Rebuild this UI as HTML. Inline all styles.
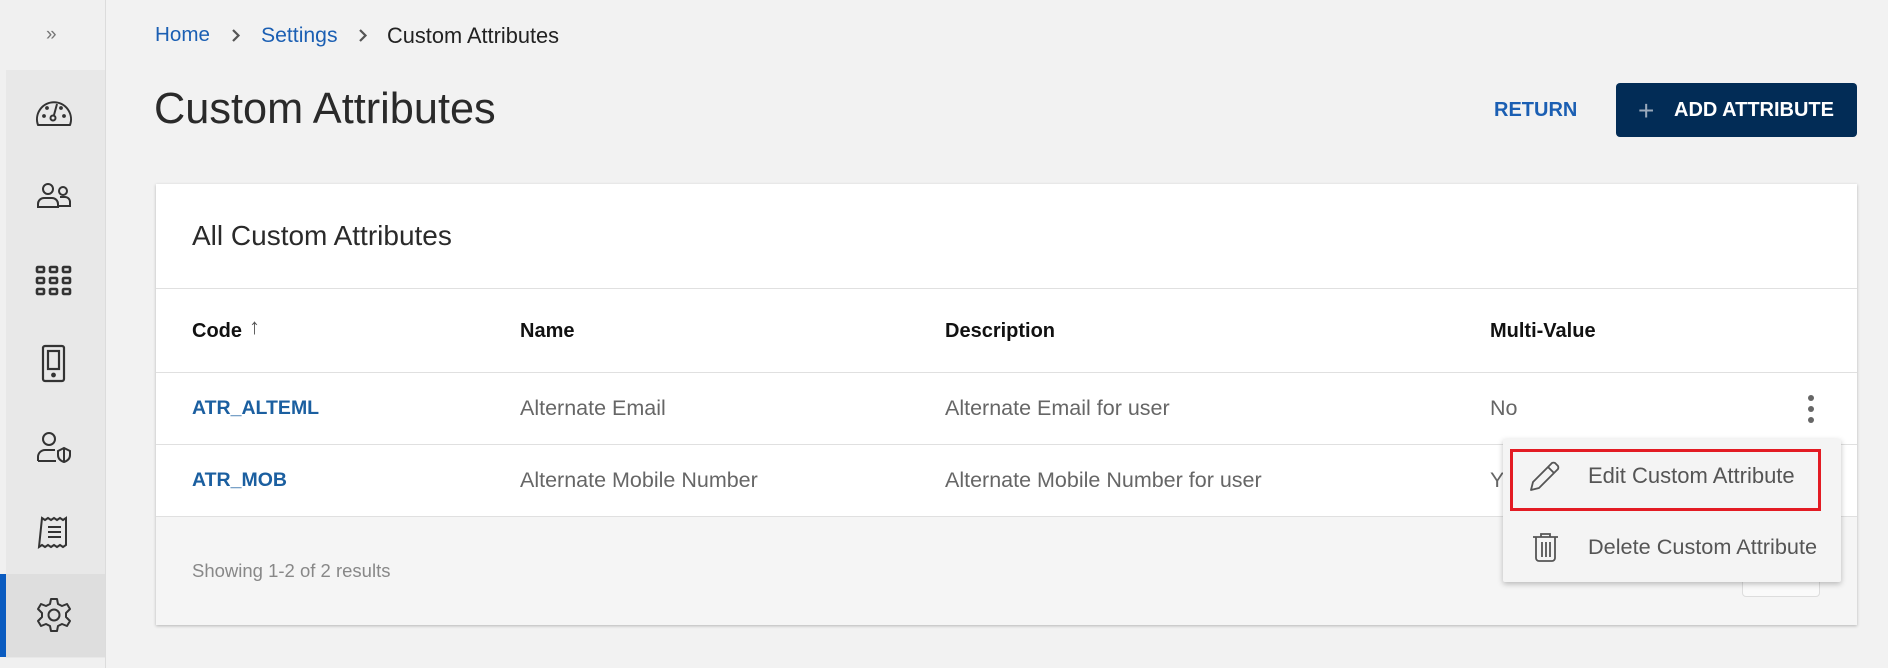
<!DOCTYPE html>
<html><head><meta charset="utf-8"><style>
*{margin:0;padding:0;box-sizing:border-box}
body{width:1888px;height:668px;background:#f2f2f2;font-family:"Liberation Sans",Arial,sans-serif;position:relative;overflow:hidden;color:#333}
.abs{position:absolute}
.sb{left:0;top:0;width:106px;height:668px;background:#f0f0f0;border-right:1px solid #dcdcdc}
.sbi{left:6px;top:70px;width:99px;height:588px;background:#e8e8e8}
.act{left:0;top:574px;width:105px;height:83px;background:#dedede}
.actbar{left:0;top:574px;width:6px;height:83px;background:#0a5bc0}
.ic{left:34px;width:40px;height:40px}
svg{overflow:visible}
.t{white-space:nowrap;line-height:1}
.card{left:156px;top:184px;width:1701px;height:441px;background:#fff;box-shadow:0 1px 3px rgba(0,0,0,.25)}
.line{left:156px;width:1701px;height:1px;background:#e0e0e0}
.b{font-size:21.5px;color:#666}
.h{font-size:20px;font-weight:bold;color:#111}
</style></head><body>
<div class="abs sb"></div>
<div class="abs sbi"></div>
<div class="abs act"></div>
<div class="abs actbar"></div>
<div class="abs t" style="left:46px;top:25px;font-size:19px;color:#777">»</div>
<svg class="abs ic" style="top:92px" viewBox="0 0 40 40" fill="none" stroke="#333" stroke-width="2"><path d="M4 33 A17 17 0 1 1 36 33 Z" stroke-linejoin="round"/><circle cx="19" cy="26" r="2.5"/><path d="M20 23 L23 12"/><circle cx="10" cy="24" r=".9" fill="#333"/><circle cx="13" cy="16" r=".9" fill="#333"/><circle cx="30" cy="24" r=".9" fill="#333"/><circle cx="27" cy="16" r=".9" fill="#333"/></svg>
<svg class="abs ic" style="top:176px" viewBox="0 0 40 40" fill="none" stroke="#333" stroke-width="2"><circle cx="14" cy="13" r="5"/><path d="M4 31 v-3 a6 6 0 0 1 6-6 h8 a6 6 0 0 1 6 6 v3 Z"/><circle cx="29" cy="15" r="4"/><path d="M26 21 h5 a5 5 0 0 1 5 5 v4 h-11"/></svg>
<svg class="abs ic" style="top:260px" viewBox="0 0 40 40" fill="none" stroke="#333" stroke-width="2.6"><g><rect x="3" y="7" width="7" height="5" rx="1"/><rect x="16" y="7" width="7" height="5" rx="1"/><rect x="29" y="7" width="7" height="5" rx="1"/><rect x="3" y="18" width="7" height="5" rx="1"/><rect x="16" y="18" width="7" height="5" rx="1"/><rect x="29" y="18" width="7" height="5" rx="1"/><rect x="3" y="29" width="7" height="5" rx="1"/><rect x="16" y="29" width="7" height="5" rx="1"/><rect x="29" y="29" width="7" height="5" rx="1"/></g></svg>
<svg class="abs ic" style="top:344px" viewBox="0 0 40 40" fill="none" stroke="#333" stroke-width="2.2"><rect x="9" y="2" width="21" height="35" rx="2"/><rect x="14" y="7" width="11" height="18"/><circle cx="19.5" cy="31" r="1.3" fill="#333"/></svg>
<svg class="abs ic" style="top:428px" viewBox="0 0 40 40" fill="none" stroke="#333" stroke-width="2"><circle cx="15" cy="11" r="6"/><path d="M4 33 v-4 a7 7 0 0 1 7-7 h10 M4 33 h18"/><path d="M24 23 l6-3 l6 3 v4 c0 4-3 6-6 7 c-3-1-6-3-6-7z M30 20 v14"/></svg>
<svg class="abs ic" style="top:512px" viewBox="0 0 40 40" fill="none" stroke="#333" stroke-width="2"><path d="M8 6 l3 2 l3-2 l3 2 l3-2 l3 2 l3-2 l3 2 l3-2 v27 l-3 2 l-3-2 l-3 2 l-3-2 l-3 2 l-3-2 l-3 2 l-3-2 l-3 2z"/><path d="M14 15 h13 M14 20 h13 M14 25 h13"/></svg>
<svg class="abs ic" style="top:595px" viewBox="0 0 40 40" fill="none" stroke="#333" stroke-width="2"><path d="M17 4 h6 l1 5 l4 2 l5-2 l3 5 l-4 4 v4 l4 4 l-3 5 l-5-2 l-4 2 l-1 5 h-6 l-1-5 l-4-2 l-5 2 l-3-5 l4-4 v-4 l-4-4 l3-5 l5 2 l4-2z" stroke-linejoin="round"/><circle cx="20" cy="20" r="5.5"/></svg>

<div class="abs t" style="left:155px;top:25px;font-size:20.6px;color:#1b5fb3">Home</div>
<svg class="abs" style="left:232px;top:29px;width:8px;height:13px" viewBox="0 0 8 13" fill="none" stroke="#555" stroke-width="2.2"><path d="M1 1 l5.5 5.5 L1 12"/></svg>
<div class="abs t" style="left:261px;top:25px;font-size:21.2px;color:#1b5fb3">Settings</div>
<svg class="abs" style="left:359px;top:29px;width:8px;height:13px" viewBox="0 0 8 13" fill="none" stroke="#555" stroke-width="2.2"><path d="M1 1 l5.5 5.5 L1 12"/></svg>
<div class="abs t" style="left:387px;top:25px;font-size:21.8px;color:#222">Custom Attributes</div>
<div class="abs t" style="left:154px;top:88px;font-size:43.3px;color:#2a2a2a">Custom Attributes</div>

<div class="abs t" style="left:1494px;top:100px;font-size:20px;font-weight:bold;color:#1b5fb3">RETURN</div>
<div class="abs" style="left:1616px;top:83px;width:241px;height:54px;background:#022c56;border-radius:4px"></div>
<div class="abs t" style="left:1638px;top:97px;font-size:28px;color:#9aa9bb">+</div>
<div class="abs t" style="left:1674px;top:100px;font-size:20px;font-weight:bold;color:#fff">ADD ATTRIBUTE</div>

<div class="abs card"></div>
<div class="abs t" style="left:192px;top:222px;font-size:28px;color:#2a2a2a">All Custom Attributes</div>
<div class="abs line" style="top:288px"></div>
<div class="abs t h" style="left:192px;top:321px">Code</div>
<div class="abs t" style="left:249px;top:316px;font-size:22px;font-weight:bold;color:#555">↑</div>
<div class="abs t h" style="left:520px;top:321px">Name</div>
<div class="abs t h" style="left:945px;top:321px">Description</div>
<div class="abs t h" style="left:1490px;top:321px">Multi-Value</div>
<div class="abs line" style="top:372px"></div>
<div class="abs t" style="left:192px;top:399px;font-size:19.5px;font-weight:bold;color:#1b5fa0">ATR_ALTEML</div>
<div class="abs t b" style="left:520px;top:398px">Alternate Email</div>
<div class="abs t b" style="left:945px;top:398px">Alternate Email for user</div>
<div class="abs t b" style="left:1490px;top:398px">No</div>
<div class="abs" style="left:1808px;top:395px;width:6px;height:6px;border-radius:3px;background:#666"></div>
<div class="abs" style="left:1808px;top:406px;width:6px;height:6px;border-radius:3px;background:#666"></div>
<div class="abs" style="left:1808px;top:417px;width:6px;height:6px;border-radius:3px;background:#666"></div>
<div class="abs line" style="top:444px"></div>
<div class="abs t" style="left:192px;top:471px;font-size:19.5px;font-weight:bold;color:#1b5fa0">ATR_MOB</div>
<div class="abs t b" style="left:520px;top:470px">Alternate Mobile Number</div>
<div class="abs t b" style="left:945px;top:470px">Alternate Mobile Number for user</div>
<div class="abs t b" style="left:1490px;top:470px">Yes</div>
<div class="abs line" style="top:516px"></div>
<div class="abs" style="left:156px;top:517px;width:1701px;height:108px;background:#f5f5f5"></div>
<div class="abs t" style="left:192px;top:562px;font-size:18.5px;color:#888">Showing 1-2 of 2 results</div>
<div class="abs" style="left:1742px;top:570px;width:78px;height:27px;border:1px solid #ddd;border-radius:4px;background:#fafafa"></div>

<div class="abs" style="left:1503px;top:439px;width:338px;height:143px;background:#f4f4f4;box-shadow:0 2px 6px rgba(0,0,0,.25);border-radius:2px"></div>
<div class="abs" style="left:1510px;top:449px;width:311px;height:62px;border:3px solid #e31b23"></div>
<svg class="abs" style="left:1530px;top:461px;width:30px;height:30px" viewBox="0 0 30 30" fill="none" stroke="#555" stroke-width="1.8" stroke-linejoin="round"><path d="M1 29 l2-8 L21 3 a3 3 0 0 1 5 0 l1 1 a3 3 0 0 1 0 5 L9 27 Z M18 6 l6 6"/></svg>
<div class="abs t" style="left:1588px;top:465px;font-size:22px;color:#555">Edit Custom Attribute</div>
<svg class="abs" style="left:1533px;top:532px;width:25px;height:30px" viewBox="0 0 25 30" fill="none" stroke="#555" stroke-width="1.8"><path d="M0 5 h25 M8 5 v-3 h9 v3 M3 5 v21 a3 3 0 0 0 3 3 h13 a3 3 0 0 0 3-3 v-21 M9 10 v15 M13 10 v15 M17 10 v15"/></svg>
<div class="abs t" style="left:1588px;top:536px;font-size:21.7px;color:#555">Delete Custom Attribute</div>
</body></html>
